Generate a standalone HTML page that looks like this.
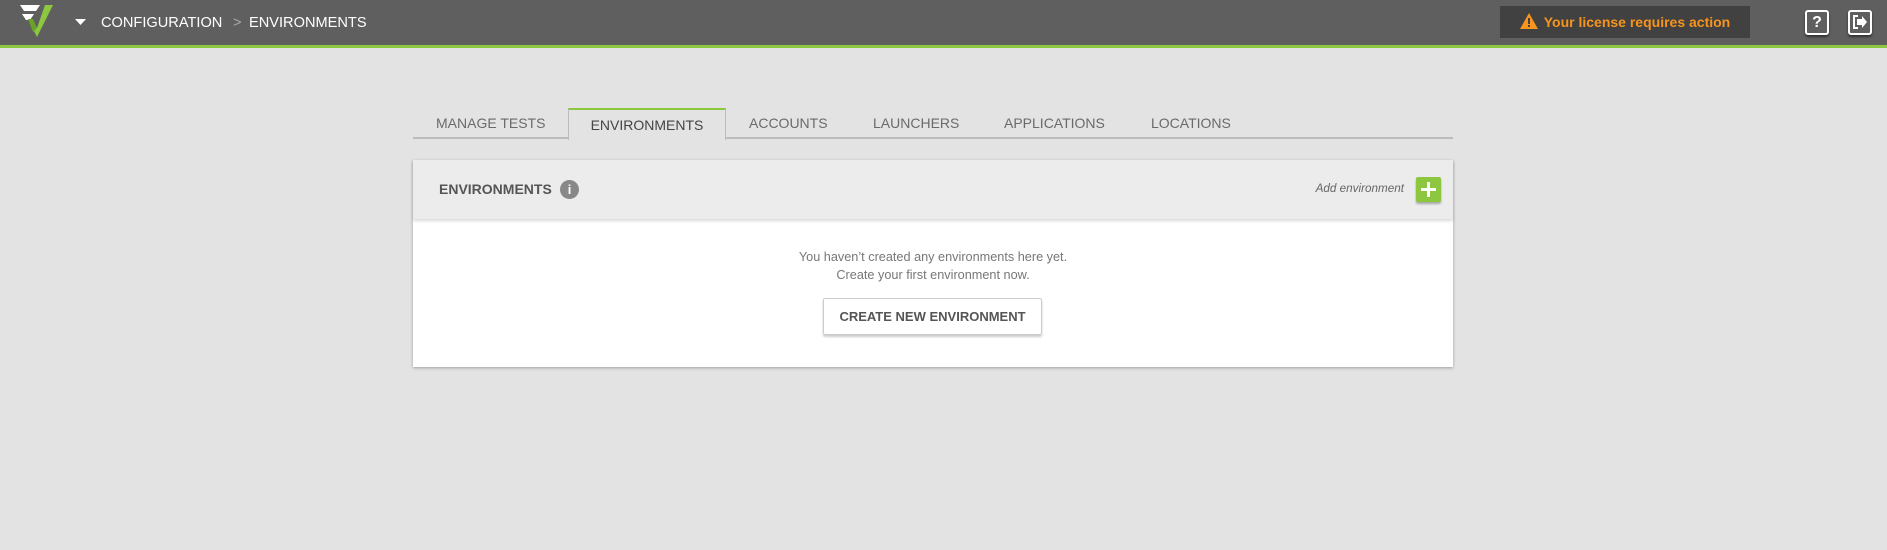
<!DOCTYPE html>
<html><head><style>
*{margin:0;padding:0;box-sizing:border-box}
body{width:1887px;height:550px;background:#e3e3e3;font-family:"Liberation Sans",sans-serif;position:relative;overflow:hidden}
.hdr{position:absolute;left:0;top:0;width:1887px;background:#5f5f5f;border-bottom:3px solid #8dc63f;height:48px}
.abs{position:absolute}
.crumb{color:#fff;font-size:14.6px;top:15px}
.lic{left:1500px;top:6px;width:250px;height:32px;background:#414141;color:#f7941d;font-weight:bold;font-size:14px;line-height:32px;text-align:center}
.ib{width:24px;height:25px;border:2px solid #fff;border-radius:3px;color:#fff;font-weight:bold;text-align:center;line-height:21px;font-size:16px;box-shadow:0 2px 2px rgba(0,0,0,.5)}
.tabs{left:413px;top:108px;width:1040px;height:31px;border-bottom:2px solid #bcbcbc}
.tab{position:absolute;top:0;height:31px;line-height:31px;font-size:14px;color:#6a6a6a}
.tab.act{left:155px;width:158px;border:1px solid #bcbcbc;border-top:2px solid #8dc63f;border-bottom:none;background:#e3e3e3;height:32px;color:#444;text-align:center;line-height:30px}
.panel{left:413px;top:160px;width:1040px;height:207px;background:#fff;box-shadow:0 1px 3px rgba(0,0,0,.3)}
.ph{height:59px;background:#ececec;box-shadow:0 2px 3px rgba(0,0,0,.15);position:relative}
</style></head><body>
<div class="hdr">
<svg class="abs" style="left:20px;top:5px" width="34" height="33" viewBox="0 0 34 33">
<polygon points="0,0 20,0 16,6 4,6" fill="#fff"/>
<polygon points="2,9 14,9 10,15 6,15" fill="#fff"/>
<polygon points="25,0 33,0 17,32 12,22 14,18 17,23" fill="#8dc63f"/>
<polygon points="8,14 13,14 17,23 13,27" fill="#6aa12a"/>
</svg>
<svg class="abs" style="left:75px;top:19px" width="11" height="6"><polygon points="0,0 11,0 5.5,6" fill="#fff"/></svg>
<div class="abs crumb" style="left:101px">CONFIGURATION</div>
<div class="abs crumb" style="left:233px;color:#aaa">&gt;</div>
<div class="abs crumb" style="left:249px">ENVIRONMENTS</div>
<div class="abs lic"><svg width="18" height="16" viewBox="0 0 18 16" style="vertical-align:-2px;margin-right:6px"><polygon points="9,0 18,16 0,16" fill="#f7941d"/><rect x="8" y="5" width="2" height="6" fill="#414141"/><rect x="8" y="12" width="2" height="2" fill="#414141"/></svg>Your license requires action</div>
<div class="abs ib" style="left:1805px;top:10px">?</div>
<div class="abs ib" style="left:1848px;top:10px"><svg width="16" height="14" viewBox="0 0 16 14" style="margin-top:3px"><path d="M6 1H2v12h4" stroke="#fff" stroke-width="2" fill="none"/><polygon points="5,4 10,4 10,1 15,7 10,13 10,10 5,10" fill="#fff"/></svg></div>
</div>
<div class="abs tabs">
<div class="tab" style="left:23px">MANAGE TESTS</div>
<div class="tab act">ENVIRONMENTS</div>
<div class="tab" style="left:336px">ACCOUNTS</div>
<div class="tab" style="left:460px">LAUNCHERS</div>
<div class="tab" style="left:591px">APPLICATIONS</div>
<div class="tab" style="left:738px">LOCATIONS</div>
</div>
<div class="abs panel">
<div class="ph">
<div class="abs" style="left:26px;top:21px;font-size:14px;font-weight:bold;color:#555">ENVIRONMENTS</div>
<div class="abs" style="left:147px;top:20px;width:19px;height:19px;border-radius:50%;background:#888;color:#fff;font-weight:bold;font-size:13px;text-align:center;line-height:19px">i</div>
<div class="abs" style="right:49px;top:22px;font-size:11.7px;font-style:italic;color:#666">Add environment</div>
<div class="abs" style="left:1003px;top:17px;width:25px;height:25px;background:#8dc63f;border-radius:2px;box-shadow:0 2px 2px rgba(0,0,0,.3)"><div class="abs" style="left:5px;top:11px;width:15px;height:3px;background:#fff"></div><div class="abs" style="left:11px;top:5px;width:3px;height:15px;background:#fff"></div></div>
</div>
<div class="abs" style="left:0;width:1040px;top:88px;text-align:center;color:#777;font-size:12.7px;line-height:18px">You haven’t created any environments here yet.<br>Create your first environment now.</div>
<div class="abs" style="left:410px;top:138px;width:219px;height:37px;border:1px solid #ccc;border-radius:2px;box-shadow:0 2px 2px rgba(0,0,0,.2);text-align:center;line-height:35px;font-size:13px;font-weight:bold;color:#555">CREATE NEW ENVIRONMENT</div>
</div>
</body></html>
